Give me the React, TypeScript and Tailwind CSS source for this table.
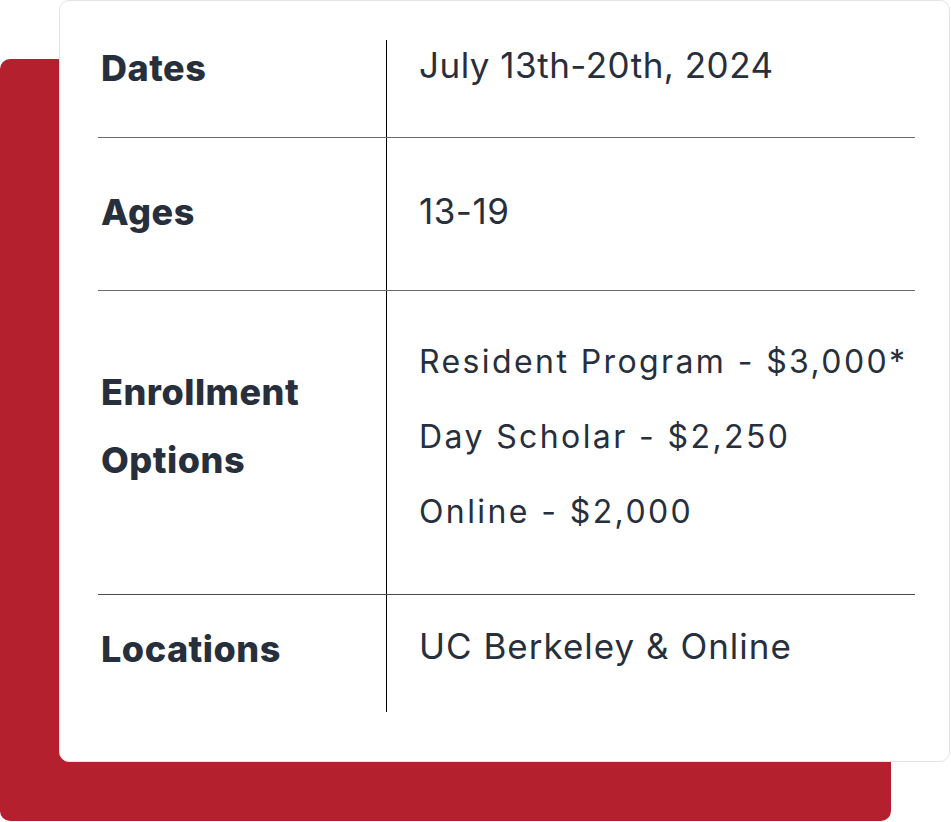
import React from 'react';

interface Row {
  label: string[];
  values: string[];
  rowClass: string;
  labelClass: string;
  valueClass: string;
}

const rows: Row[] = [
  {
    label: ['Dates'],
    values: ['July 13th-20th, 2024'],
    rowClass: 'h-[98px] border-b border-[#6a6a6a]',
    labelClass: 'pt-[10px] leading-none',
    valueClass: 'pt-[8px] text-[35px] leading-none tracking-[0.5px]',
  },
  {
    label: ['Ages'],
    values: ['13-19'],
    rowClass: 'h-[153px] border-b border-[#6a6a6a]',
    labelClass: 'pt-[56px] leading-none',
    valueClass: 'pt-[56px] text-[35px] leading-none tracking-[0.5px]',
  },
  {
    label: ['Enrollment', 'Options'],
    values: ['Resident Program - $3,000*', 'Day Scholar - $2,250', 'Online - $2,000'],
    rowClass: 'h-[304px] border-b border-[#4a4a4a]',
    labelClass: 'pt-[67px] leading-[68px]',
    valueClass: 'pt-[33px] text-[32px] leading-[75px] tracking-[2.4px]',
  },
  {
    label: ['Locations'],
    values: ['UC Berkeley & Online'],
    rowClass: 'h-[117px]',
    labelClass: 'pt-[36px] leading-none',
    valueClass: 'pt-[34px] text-[35px] leading-none tracking-[1px]',
  },
];

export default function App() {
  return (
    <div className="w-[951px] h-[822px] bg-white pl-[59px] overflow-hidden [font-family:Inter,'Noto_Sans',sans-serif] text-[#272f3d]">
      <div className="w-[891px] h-[762px] bg-white border border-[#e4e4e4] rounded-[10px] shadow-[-59px_59px_0_0_#b4202d] pt-[39px] pl-[38px] pr-[34px]">
        <div className="flex flex-col">
          {rows.map((row) => (
            <div key={row.label.join(' ')} className={`flex ${row.rowClass}`}>
              <div className={`w-[289px] shrink-0 border-r border-black pl-[3px] text-[36px] font-extrabold tracking-[0.5px] ${row.labelClass}`}>
                {row.label.map((l) => (
                  <div key={l}>{l}</div>
                ))}
              </div>
              <div className={`flex-1 pl-[32px] ${row.valueClass}`}>
                {row.values.map((v) => (
                  <div key={v}>{v}</div>
                ))}
              </div>
            </div>
          ))}
        </div>
      </div>
    </div>
  );
}
